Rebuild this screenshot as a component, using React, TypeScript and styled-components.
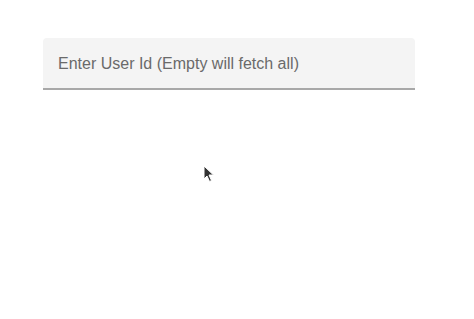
import React from 'react'
import styled, { createGlobalStyle } from 'styled-components'

const GlobalStyle = createGlobalStyle`
  html, body {
    margin: 0;
    padding: 0;
    background: #ffffff;
    font-family: "Liberation Sans", Arial, sans-serif;
  }
`;

const Page = styled.div`
  position: relative;
  width: 474px;
  height: 319px;
  box-sizing: border-box;
  padding: 38px 59px 0 43px;
`;

const Field = styled.div`
  position: relative;
  height: 50px;
  background: #f4f4f4;
  border-radius: 4px 4px 0 0;
  border-bottom: 2px solid #a8a8a8;
  display: flex;
  align-items: center;
  padding: 0 15px;
`;

const Input = styled.input`
  flex: 1;
  border: none;
  outline: none;
  background: transparent;
  font-family: "Liberation Sans", Arial, sans-serif;
  font-size: 16px;
  color: rgba(0, 0, 0, 0.87);
  padding: 0;
  margin-top: 2px;

  &::placeholder {
    color: #6a6a6a;
    opacity: 1;
  }
`;

const Cursor = styled.svg`
  position: absolute;
  left: 203px;
  top: 165px;
`;

export default function App() {
  return (
    <>
      <GlobalStyle />
      <Page>
        <Field>
          <Input placeholder="Enter User Id (Empty will fetch all)" />
        </Field>
        <Cursor width="12" height="18" viewBox="0 0 12 18">
          <path d="M1 1 L1 14 L4 11 L6.5 16.5 L8.5 15.5 L6 10 L10.5 10 Z" fill="#333" stroke="#fff" strokeWidth="1" />
        </Cursor>
      </Page>
    </>
  );
}
